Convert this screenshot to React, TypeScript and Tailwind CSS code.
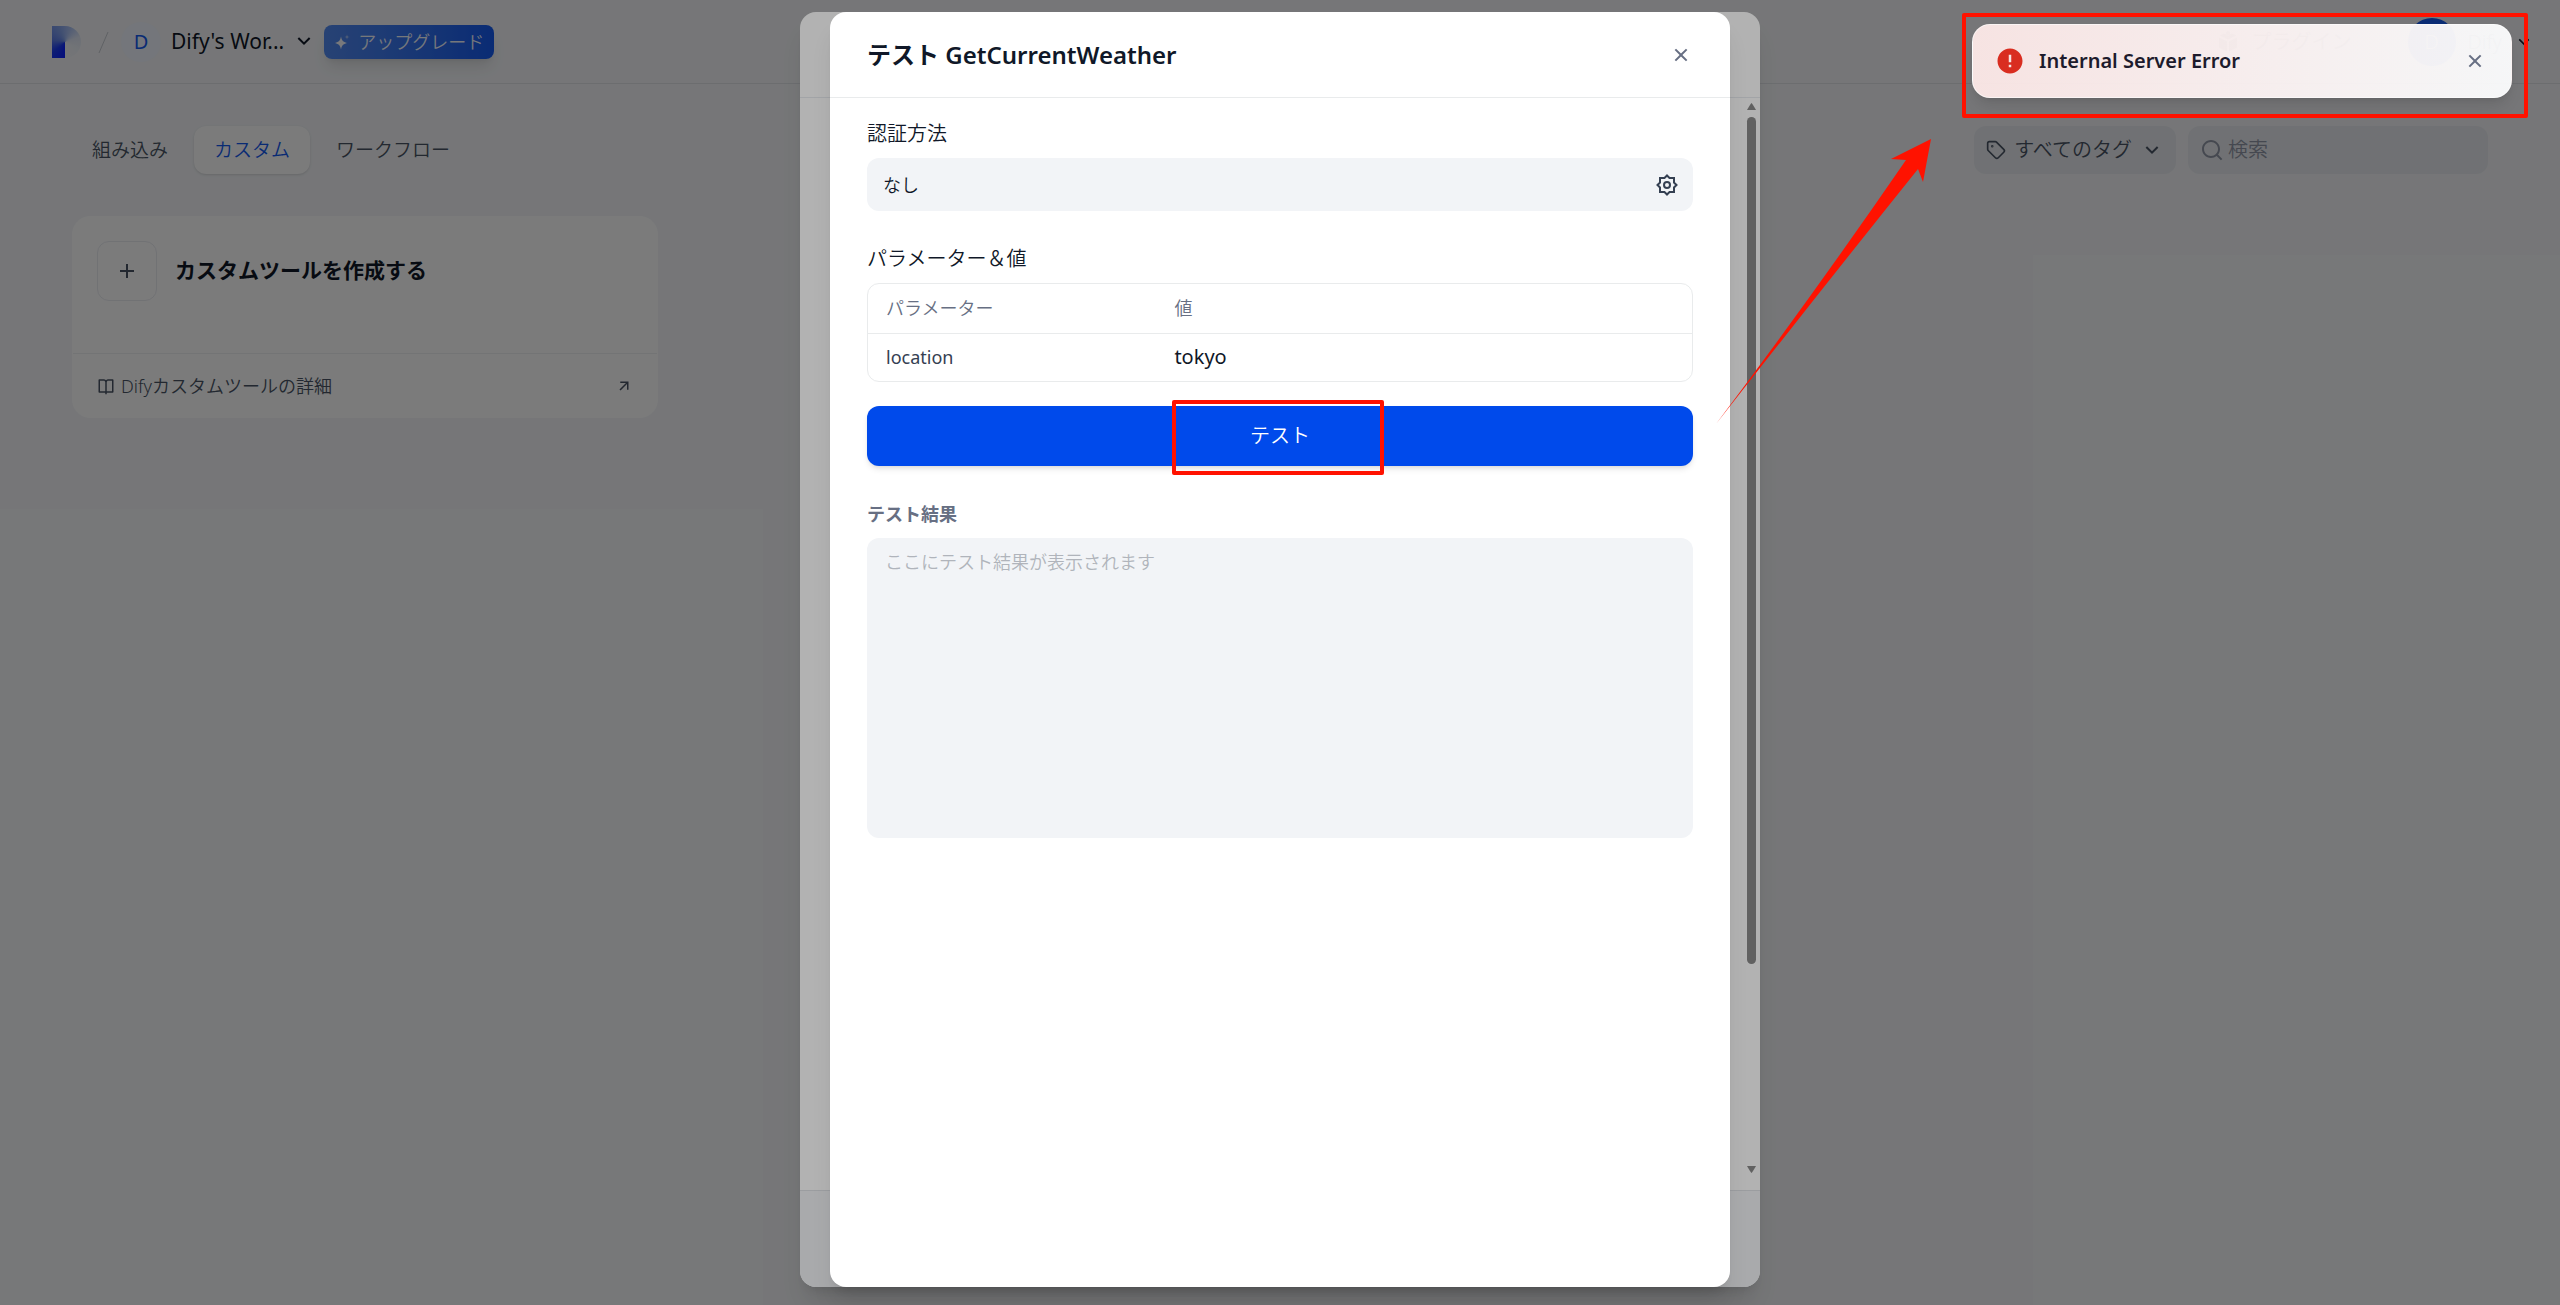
import type { ReactNode } from 'react';
import { Tag } from 'lucide-react';
import {
  RiAddLine,
  RiArrowDownSLine,
  RiArrowRightUpLine,
  RiBookOpenLine,
  RiCloseLine,
  RiErrorWarningFill,
  RiSearchLine,
} from 'react-icons/ri';

const TABS = [
  { name: '組み込み', active: false },
  { name: 'カスタム', active: true },
  { name: 'ワークフロー', active: false },
];

function Logo() {
  return (
    <div
      role="img"
      aria-label="Dify"
      className="h-8 w-[29px] rounded-r-full bg-[conic-gradient(from_180deg_at_46%_50%,#0a1eff_0deg,#1c3cf0_50deg,#5f7fe6_100deg,#86a4ea_160deg,#a9bff0_200deg,#dde4f3_250deg,#eaeef5_300deg,#f0f2f5_360deg)]"
    />
  );
}

function Sparkle() {
  return (
    <svg className="size-4" viewBox="0 0 16 16" fill="currentColor">
      <path d="M7 2.500c.9 4.200 2 5.400 6 6.500-4 1.100-5.100 2.300-6 6.500C6.100 11.300 5 10.100 1 9c4-1.100 5.100-2.300 6-6.500z" />
      <path opacity=".5" d="M13 .5c.3 1.600.8 2.100 2.500 2.500-1.700.4-2.200.9-2.500 2.500-.3-1.600-.8-2.100-2.500-2.500 1.700-.4 2.200-.9 2.500-2.500z" />
    </svg>
  );
}

function Gear() {
  return (
    <svg className="size-6" viewBox="0 0 24 24" fill="none" stroke="currentColor" strokeWidth={2}>
      <path d="M12 2.500 14.500 5H19v4.500L21.500 12 19 14.500V19h-4.500L12 21.500 9.500 19H5v-4.500L2.500 12 5 9.500V5h4.500z" />
      <circle cx="12" cy="12" r="3" />
    </svg>
  );
}

function PluginIcon() {
  return (
    <svg className="size-6" viewBox="0 0 24 24" fill="currentColor">
      <path d="M11 11.500v10L3 17.500v-10zM13 11.500v10l8-4v-10zM4 5.500l4-2 4 2 4-2 4 2-8 4z" />
      <circle cx="12" cy="3" r="2" />
    </svg>
  );
}

function Header() {
  return (
    <header className="flex h-21 items-center justify-between border-b border-[#dfe1e6] pr-[26px] pl-13">
      <div className="flex items-center">
        <Logo />
        <svg className="ml-4 h-6 w-3" viewBox="0 0 12 24" stroke="#c5c8cf" strokeWidth={1}>
          <path d="M2 23 11 2" />
        </svg>
        <span className="ml-3 flex size-10 items-center justify-center rounded-full bg-[#eef3fc] text-xl text-[#155aef]">D</span>
        <button className="ml-2 flex items-center gap-2 pl-[2px] text-[21px]">
          Dify's Wor...
          <RiArrowDownSLine className="size-6" />
        </button>
        <button className="ml-2 flex h-[34px] items-center gap-2 rounded-lg bg-linear-to-r from-[#5289ee] to-[#155aef] px-[10px] text-lg font-[350] text-white/95 shadow-lg">
          <Sparkle />
          アップグレード
        </button>
      </div>
      <div className="flex items-center text-xl font-[350] text-[#495464]">
        <a href="#plugins" className="mr-14 flex items-center gap-3">
          <PluginIcon />
          プラグイン
        </a>
        <button className="flex items-center gap-3">
          <span className="flex size-12 items-center justify-center rounded-full bg-[#155aef] text-white">D</span>
          Dify
          <RiArrowDownSLine className="size-5 text-[#101828]" />
        </button>
      </div>
    </header>
  );
}

function Toolbar() {
  return (
    <div className="flex items-center justify-between font-[350]">
      <nav className="flex items-center gap-[6px] text-[19px]">
        {TABS.map(({ name, active }) => (
          <button
            key={name}
            className={
              active
                ? 'h-12 rounded-xl bg-[#fcfcfd] px-5 text-[#155aef] shadow-sm'
                : 'h-12 rounded-xl px-5 text-[#495464]'
            }
          >
            {name}
          </button>
        ))}
      </nav>
      <div className="flex items-center gap-3">
        <button className="flex h-12 items-center gap-2 rounded-xl bg-[#e7e9ee] px-3 text-[#495464]">
          <Tag className="size-5" />
          すべてのタグ
          <RiArrowDownSLine className="size-6" />
        </button>
        <label className="flex h-12 w-75 items-center gap-1 rounded-xl bg-[#e7e9ee] px-3 text-[#8f96a5]">
          <RiSearchLine className="size-6" />
          <input aria-label="検索" placeholder="検索" className="min-w-0 flex-1 placeholder:text-[#8f96a5]" />
        </label>
      </div>
    </div>
  );
}

function CreateCard() {
  return (
    <section className="mt-[42px] w-[586px] rounded-[18px] border border-[#fdfdfe] bg-[#fdfdfe]">
      <button className="flex h-34 w-full items-start gap-[18px] px-6 pt-6 text-left">
        <span className="flex size-15 items-center justify-center rounded-xl border border-[#e9ebf0] text-[#495464]">
          <RiAddLine className="size-6" />
        </span>
        <span className="flex h-15 items-center text-[21px] font-bold text-[#101828]">カスタムツールを作成する</span>
      </button>
      <a
        href="#docs"
        className="flex h-16 items-center gap-[6px] border-t border-[#edeef1] px-6 text-lg font-[350] text-[#495464]"
      >
        <RiBookOpenLine className="size-[18px]" />
        <span className="flex-1">Difyカスタムツールの詳細</span>
        <RiArrowRightUpLine className="size-[18px]" />
      </a>
    </section>
  );
}

function Overlay({ children }: { children: ReactNode }) {
  return <div className="absolute inset-0 flex justify-center bg-black/30 pt-3 pb-[18px]">{children}</div>;
}

// the drawer that stays open under the test dialog
function EditDrawer() {
  return (
    <div className="flex w-240 flex-col overflow-hidden rounded-2xl bg-white shadow-xl">
      <div className="h-[86px] border-b border-[#e9ebf0]" />
      <div className="flex flex-1 flex-col items-end pt-1 pr-1">
        <div className="flex w-[9px] flex-1 flex-col items-center gap-[6px] pb-4 text-[#8b8b8b]">
          <svg className="h-[9px] w-[9px]" viewBox="0 0 9 9" fill="currentColor">
            <path d="M4.500 1Q5 1 9 8H0Q4 1 4.500 1z" />
          </svg>
          <div className="w-full flex-[850] rounded-full bg-[#8b8b8b]" />
          <div className="flex-[190]" />
          <svg className="h-[9px] w-[9px]" viewBox="0 0 9 9" fill="currentColor">
            <path d="M4.500 8Q5 8 9 1H0Q4 8 4.500 8z" />
          </svg>
        </div>
      </div>
      <div className="h-[97px] border-t border-[#dfe1e6] bg-[#f2f4f7]" />
    </div>
  );
}

function TestDialog() {
  return (
    <div role="dialog" aria-labelledby="dialog-title" className="w-225 rounded-2xl bg-white text-[#101828] shadow-xl">
      <div className="flex h-[86px] items-center justify-between border-b border-[#e9ebec] px-[37px]">
        <h2 id="dialog-title" className="text-2xl font-semibold">
          テスト GetCurrentWeather
        </h2>
        <button aria-label="閉じる" className="text-[#676f83]">
          <RiCloseLine className="size-6" />
        </button>
      </div>
      <div className="px-[37px] pt-5">
        <h3 className="leading-8 font-[350]">認証方法</h3>
        <button className="mt-2 flex h-[53px] w-full items-center justify-between rounded-xl bg-[#f2f4f7] pr-[14px] pl-4 text-lg font-[350]">
          なし
          <span className="text-[#354052]">
            <Gear />
          </span>
        </button>
        <h3 className="mt-8 leading-8 font-[350]">パラメーター＆値</h3>
        <div className="mt-2 rounded-xl border border-[#e9ebec]">
          <table className="w-full text-left text-lg">
            <thead className="text-[#676f83]">
              <tr className="h-[49px] border-b border-[#e9ebec]">
                <th className="w-[35%] pl-[18px] font-[350]">パラメーター</th>
                <th className="pl-[18px] font-[350]">値</th>
              </tr>
            </thead>
            <tbody>
              <tr className="h-12">
                <td className="pl-[18px] text-[#354052]">location</td>
                <td className="pl-[18px]">
                  <input aria-label="location" defaultValue="tokyo" className="w-full text-xl" />
                </td>
              </tr>
            </tbody>
          </table>
        </div>
        <div className="relative mt-6">
          <button className="h-15 w-full rounded-xl bg-[#004aeb] font-[350] text-white shadow-md">テスト</button>
          <div className="pointer-events-none absolute -top-[6px] left-[305px] h-[75px] w-53 rounded-xs border-4 border-[#ff1200]" />
        </div>
        <h3 className="mt-8 text-lg leading-8 font-bold text-[#676f83]">テスト結果</h3>
        <div className="mt-2 h-75 rounded-xl bg-[#f2f4f7] px-[18px] py-2 text-lg leading-8 font-[350] text-[#b0b4bb]">
          ここにテスト結果が表示されます
        </div>
      </div>
    </div>
  );
}

function Toast() {
  return (
    <div className="absolute top-[13px] right-8 rounded-xs border-4 border-[#ff1200] pt-[7px] pr-3 pb-4 pl-[6px]">
      <div
        role="alert"
        className="flex h-[74px] w-135 items-center rounded-[18px] border border-white/60 bg-linear-to-r from-[#fae6e5]/97 to-[#f9fafb]/97 pr-6 pl-[22px] shadow-lg"
      >
        <RiErrorWarningFill className="size-[30px] text-[#d92d20]" />
        <span className="ml-[14px] flex-1 text-xl font-semibold text-[#1d1b2c]">Internal Server Error</span>
        <button aria-label="閉じる" className="text-[#676f83]">
          <RiCloseLine className="size-6" />
        </button>
      </div>
    </div>
  );
}

function Arrow() {
  return (
    <svg className="pointer-events-none absolute top-[139px] left-1/2 ml-109 h-[285px] w-54" viewBox="0 0 216 285" fill="#ff1200">
      <path d="M215 0 175 20 190 21Q100 152 0 285 105 151 202 30L207 43z" />
    </svg>
  );
}

export default function App() {
  return (
    <div className="relative min-h-screen overflow-hidden bg-[#f2f4f7] font-['Noto_Sans','Noto_Sans_CJK_JP',sans-serif] text-xl text-[#101828]">
      <Header />
      <main className="px-[72px] pt-[42px]">
        <Toolbar />
        <CreateCard />
      </main>
      <Overlay>
        <EditDrawer />
      </Overlay>
      <Overlay>
        <TestDialog />
      </Overlay>
      <Toast />
      <Arrow />
    </div>
  );
}
